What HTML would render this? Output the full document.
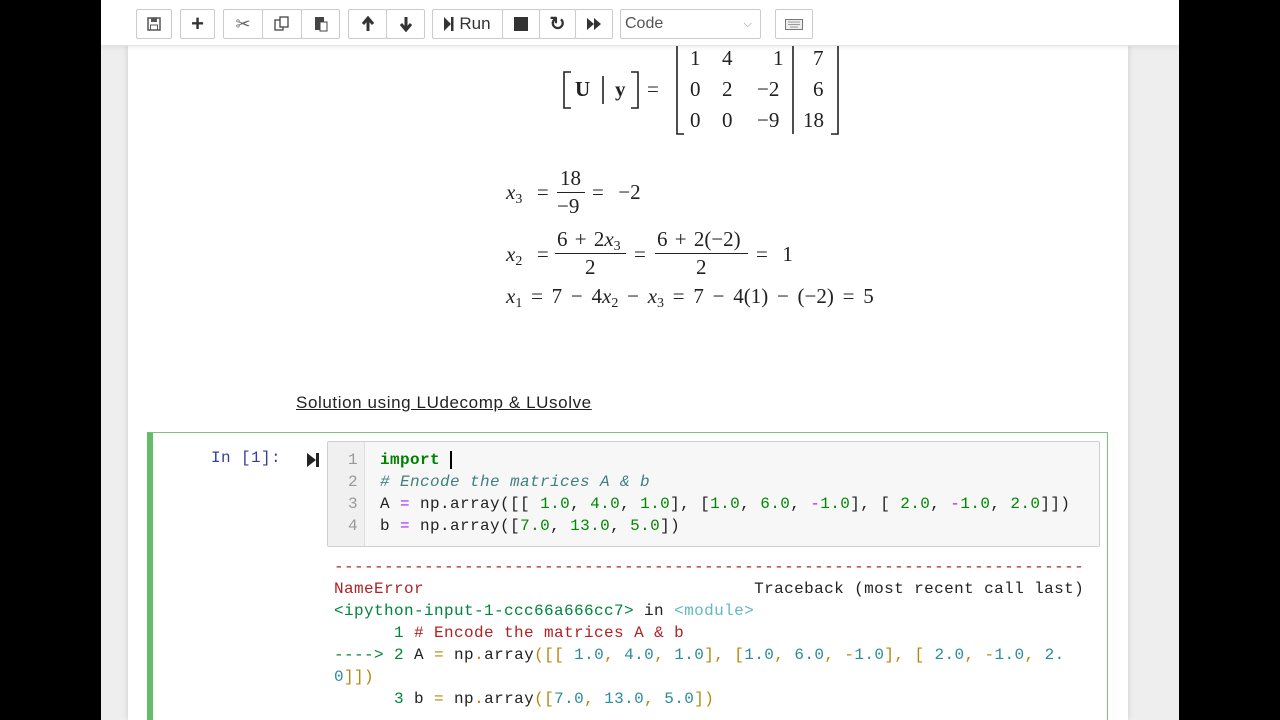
<!DOCTYPE html>
<html><head><meta charset="utf-8"><style>
*{margin:0;padding:0;box-sizing:border-box}
html,body{width:1280px;height:720px;overflow:hidden}
body{position:relative;background:#000;font-family:"Liberation Sans",sans-serif}
.a{position:absolute}
.page{left:101px;top:0;width:1078px;height:720px;background:#eee}
.nb{left:128px;top:0;width:1000px;height:720px;background:#fff;box-shadow:0 0 6px rgba(0,0,0,.15)}
.tb{left:101px;top:0;width:1078px;height:46px;background:#fff;border-bottom:1px solid #e4e4e4;box-shadow:0 2px 4px rgba(0,0,0,.06)}
.btn{position:absolute;top:9px;height:30px;border:1px solid #ccc;border-radius:2px;background:#fff;display:flex;align-items:center;justify-content:center;color:#333;font-size:16px}
.m{font-family:"Liberation Serif",serif;font-size:21px;color:#222;position:absolute;white-space:pre;line-height:1;word-spacing:2px}
.i{font-style:italic}
.sub{font-size:14px;position:relative;top:4px}
.fl{position:absolute;height:1px;background:#222}
.code{font-family:"Liberation Mono",monospace;font-size:16px;letter-spacing:.4px;white-space:pre;position:absolute;line-height:22px}
.kw{color:#008000;font-weight:bold}.cm{color:#408080;font-style:italic}.op{color:#aa22ff}.nu{color:#080}
.red{color:#b22222}.grn{color:#00843d}.cy{color:#2a8b9b}.yl{color:#b8860b}.lc{color:#61b8c4}
</style></head><body>
<div class="a page"></div>
<div class="a nb"></div>

<svg class="a" style="left:0;top:0" width="1280" height="720">
<g stroke="#222" stroke-width="1.6" fill="none">
<path d="M571 72 H564 V108 H571"/>
<path d="M631 72 H638 V108 H631"/>
<line x1="603" y1="76" x2="603" y2="104"/>
<path d="M684 40 H677 V134 H684"/>
<path d="M831 40 H838 V134 H831"/>
<line x1="793" y1="40" x2="793" y2="134"/>
</g>
</svg>
<span class="m" style="left:575px;top:79px;font-weight:bold">U</span>
<span class="m" style="left:615px;top:79px;font-weight:bold">y</span>
<span class="m" style="left:647px;top:79px">=</span>
<span class="m" style="left:690px;top:48px">1</span><span class="m" style="left:722px;top:48px">4</span><span class="m" style="left:773px;top:48px">1</span><span class="m" style="left:813px;top:48px">7</span>
<span class="m" style="left:690px;top:79px">0</span><span class="m" style="left:722px;top:79px">2</span><span class="m" style="left:757px;top:79px">−2</span><span class="m" style="left:813px;top:79px">6</span>
<span class="m" style="left:690px;top:110px">0</span><span class="m" style="left:722px;top:110px">0</span><span class="m" style="left:757px;top:110px">−9</span><span class="m" style="left:803px;top:110px">18</span>

<span class="m" style="left:506px;top:182px"><span class="i">x</span><span class="sub">3</span>  =</span>
<span class="m" style="left:560px;top:168px">18</span>
<div class="fl" style="left:557px;top:192px;width:28px"></div>
<span class="m" style="left:557px;top:196px">−9</span>
<span class="m" style="left:592px;top:182px">=  −2</span>

<span class="m" style="left:506px;top:244px"><span class="i">x</span><span class="sub">2</span>  =</span>
<span class="m" style="left:557px;top:229px">6 + 2<span class="i">x</span><span class="sub">3</span></span>
<div class="fl" style="left:555px;top:253px;width:71px"></div>
<span class="m" style="left:585px;top:257px">2</span>
<span class="m" style="left:634px;top:244px">=</span>
<span class="m" style="left:657px;top:229px">6 + 2(−2)</span>
<div class="fl" style="left:655px;top:253px;width:93px"></div>
<span class="m" style="left:696px;top:257px">2</span>
<span class="m" style="left:756px;top:244px">=  1</span>

<span class="m" style="left:506px;top:286px;word-spacing:3.5px"><span class="i">x</span><span class="sub">1</span> = 7 − 4<span class="i">x</span><span class="sub">2</span> − <span class="i">x</span><span class="sub">3</span> = 7 − 4(1) − (−2) = 5</span>

<div class="a" style="left:296px;top:393px;font-size:17px;letter-spacing:.6px;color:#222;text-decoration:underline">Solution using LUdecomp &amp; LUsolve</div>

<div class="a" style="left:147px;top:432px;width:961px;height:300px;border:1px solid #7cc47c;border-left:6px solid #66bb6a;background:#fff"></div>
<div class="a" style="left:211px;top:449px;font-family:'Liberation Mono',monospace;font-size:16px;letter-spacing:.4px;color:#303f9f">In [1]:</div>
<svg class="a" style="left:306px;top:452px" width="14" height="16"><path d="M1 1 L10 8 L1 15Z" fill="#222"/><rect x="10" y="1" width="3" height="14" fill="#222"/></svg>
<div class="a" style="left:327px;top:441px;width:773px;height:106px;background:#f7f7f7;border:1px solid #cfcfcf;border-radius:2px"></div>
<div class="a" style="left:328px;top:442px;width:37px;height:104px;background:#f0f0f0;border-right:1px solid #ddd"></div>
<div class="code" style="left:348px;top:449px;color:#999">1
2
3
4</div>
<div class="code" style="left:380px;top:449px;color:#222"><span class="kw">import</span> <span style="border-left:2px solid #000"></span>
<span class="cm"># Encode the matrices A &amp; b</span>
A <span class="op">=</span> np.array([[ <span class="nu">1.0</span>, <span class="nu">4.0</span>, <span class="nu">1.0</span>], [<span class="nu">1.0</span>, <span class="nu">6.0</span>, <span class="op">-</span><span class="nu">1.0</span>], [ <span class="nu">2.0</span>, <span class="op">-</span><span class="nu">1.0</span>, <span class="nu">2.0</span>]])
b <span class="op">=</span> np.array([<span class="nu">7.0</span>, <span class="nu">13.0</span>, <span class="nu">5.0</span>])</div>

<div class="code" style="left:334px;top:556px;color:#222"><span class="red">---------------------------------------------------------------------------</span>
<span class="red">NameError</span>                                 Traceback (most recent call last)
<span class="grn">&lt;ipython-input-1-ccc66a666cc7&gt;</span> in <span class="lc">&lt;module&gt;</span>
<span class="grn">      1</span> <span class="red"># Encode the matrices A &amp; b</span>
<span class="grn">----&gt; 2</span> A <span class="yl">=</span> np<span class="yl">.</span>array<span class="yl">([[</span> <span class="cy">1.0</span><span class="yl">,</span> <span class="cy">4.0</span><span class="yl">,</span> <span class="cy">1.0</span><span class="yl">],</span> <span class="yl">[</span><span class="cy">1.0</span><span class="yl">,</span> <span class="cy">6.0</span><span class="yl">,</span> <span class="yl">-</span><span class="cy">1.0</span><span class="yl">],</span> <span class="yl">[</span> <span class="cy">2.0</span><span class="yl">,</span> <span class="yl">-</span><span class="cy">1.0</span><span class="yl">,</span> <span class="cy">2.</span>
<span class="cy">0</span><span class="yl">]])</span>
<span class="grn">      3</span> b <span class="yl">=</span> np<span class="yl">.</span>array<span class="yl">([</span><span class="cy">7.0</span><span class="yl">,</span> <span class="cy">13.0</span><span class="yl">,</span> <span class="cy">5.0</span><span class="yl">])</span></div>

<div class="a tb"></div>
<div class="btn" style="left:136px;width:36px"><svg width="14" height="14"><rect x="1" y="1" width="12" height="12" fill="none" stroke="#555" stroke-width="1.5"/><rect x="4" y="1" width="6" height="4" fill="#555"/><rect x="3.5" y="8" width="7" height="5" fill="none" stroke="#555"/></svg></div>
<div class="btn" style="left:180px;width:35px;font-size:22px;font-weight:bold">+</div>
<div class="btn" style="left:223px;width:40px;color:#666;font-size:18px">✂</div>
<div class="btn" style="left:262px;width:40px"><svg width="16" height="16" fill="none" stroke="#444" stroke-width="1.3"><rect x="1" y="4" width="8" height="10"/><rect x="6" y="1" width="8" height="10" fill="#fff"/></svg></div>
<div class="btn" style="left:301px;width:39px"><svg width="14" height="16"><rect x="1" y="1" width="9" height="13" fill="#444"/><rect x="6" y="6" width="7" height="9" fill="#fff" stroke="#444"/></svg></div>
<div class="btn" style="left:348px;width:39px"><svg width="14" height="16"><path d="M7 15V3M2 8L7 2L12 8" stroke="#333" stroke-width="3" fill="none"/></svg></div>
<div class="btn" style="left:386px;width:39px"><svg width="14" height="16"><path d="M7 1V13M2 8L7 14L12 8" stroke="#333" stroke-width="3" fill="none"/></svg></div>
<div class="btn" style="left:432px;width:71px;gap:5px;font-size:17px"><svg width="10" height="14"><path d="M0 0 L7 7 L0 14Z" fill="#333"/><rect x="7" y="0" width="2.5" height="14" fill="#333"/></svg>Run</div>
<div class="btn" style="left:502px;width:38px"><div style="width:14px;height:14px;background:#333"></div></div>
<div class="btn" style="left:539px;width:37px;font-size:19px;font-weight:bold">↻</div>
<div class="btn" style="left:575px;width:38px"><svg width="14" height="12"><path d="M0 0 L7 6 L0 12Z M7 0 L14 6 L7 12Z" fill="#333"/></svg></div>
<div class="btn" style="left:620px;width:141px;justify-content:space-between;padding:0 8px 0 4px;color:#555">Code<span style="font-size:11px;color:#888">⌵</span></div>
<div class="btn" style="left:775px;width:38px"><svg width="18" height="11"><rect x="0.5" y="0.5" width="17" height="10" fill="#eee" stroke="#777"/><path d="M3 3h12M3 5.5h12M5 8h8" stroke="#999"/></svg></div>
</body></html>
